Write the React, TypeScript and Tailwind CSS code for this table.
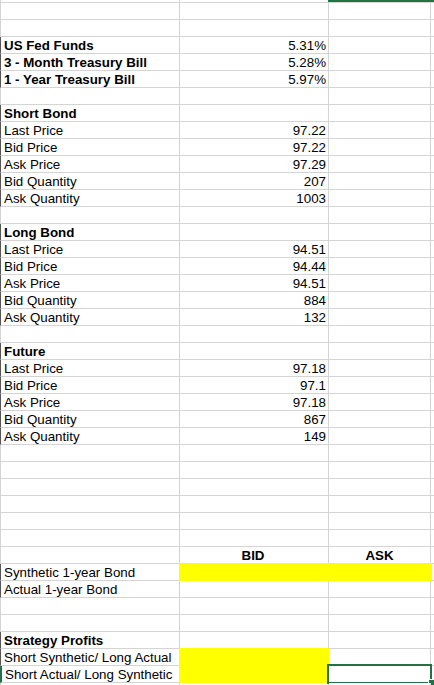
import React from "react";

type Row = {
  a?: string;
  b?: string;
  c?: string;
  bold?: boolean; // bold label in col A
  head?: boolean; // bold centered header in B/C
  yb?: boolean; // yellow fill col B
  yc?: boolean; // yellow fill col C
  mark?: boolean; // dark left edge
  sel?: boolean; // selected C cell
};

const block = (title: string, vals: string[]): Row[] => [
  { a: title, bold: true, mark: true },
  { a: "Last Price", b: vals[0], mark: true },
  { a: "Bid Price", b: vals[1], mark: true },
  { a: "Ask Price", b: vals[2], mark: true },
  { a: "Bid Quantity", b: vals[3], mark: true },
  { a: "Ask Quantity", b: vals[4], mark: true },
];

const rows: Row[] = [
  {},
  {},
  { a: "US Fed Funds", b: "5.31%", bold: true, mark: true },
  { a: "3 - Month Treasury Bill", b: "5.28%", bold: true, mark: true },
  { a: "1 - Year Treasury Bill", b: "5.97%", bold: true, mark: true },
  {},
  ...block("Short Bond", ["97.22", "97.22", "97.29", "207", "1003"]),
  {},
  ...block("Long Bond", ["94.51", "94.44", "94.51", "884", "132"]),
  {},
  ...block("Future", ["97.18", "97.1", "97.18", "867", "149"]),
  {},
  {},
  {},
  {},
  {},
  {},
  { b: "BID", c: "ASK", head: true },
  { a: "Synthetic 1-year Bond", yb: true, yc: true, mark: true },
  { a: "Actual 1-year Bond", mark: true },
  {},
  {},
  { a: "Strategy Profits", bold: true, mark: true },
  { a: "Short Synthetic/ Long Actual", yb: true, mark: true },
  { a: "Short Actual/ Long Synthetic", yb: true, mark: true, sel: true },
  {},
];

function SheetRow({ r }: { r: Row }) {
  const yellow = "bg-[#ffff00] border-[#ffff00] shadow-[0_0_0_1px_#ffff00]";
  return (
    <div className="flex h-[17px]">
      <div
        className={`box-border w-[180px] shrink-0 border-b border-r border-l border-b-[#d4d4d4] border-r-[#d4d4d4] bg-white pl-[3px] whitespace-nowrap overflow-hidden ${
          r.sel ? "border-l-[#217346] border-l-2 pl-[2px]" : r.mark ? "border-l-[#555555]" : "border-l-[#d4d4d4]"
        } ${r.bold ? "font-bold" : ""}`}
      >
        {r.a}
      </div>
      <div
        className={`box-border w-[149px] shrink-0 border-b border-r pr-[2px] whitespace-nowrap ${
          r.head ? "text-center font-bold" : "text-right"
        } ${r.yb ? yellow : "border-[#d4d4d4] bg-white"}`}
      >
        {r.b}
      </div>
      <div
        className={`relative box-border w-[102px] shrink-0 border-b border-r whitespace-nowrap ${
          r.head ? "text-center font-bold" : "text-right pr-[2px]"
        } ${r.yc ? yellow : "border-[#d4d4d4] bg-white"}`}
      >
        {r.c}
        {r.sel && (
          <div className="absolute -left-[2px] -top-[2px] h-[20px] w-[105px] border-2 border-[#217346]">
            <div className="absolute left-[99px] top-[13px] h-[7px] w-[7px] border border-white bg-[#217346]" />
          </div>
        )}
      </div>
      <div className="box-border flex-1 border-b border-[#d4d4d4] bg-white" />
    </div>
  );
}

export default function App() {
  return (
    <div
      className="h-[685px] w-[434px] overflow-hidden bg-white text-[13.33px] leading-[17px] text-black"
      style={{ fontFamily: '"Liberation Sans", Arial, sans-serif' }}
    >
      {/* top strip with the selection edge of the cell above */}
      <div className="flex h-[3px]">
        <div className="box-border w-[180px] border-b border-l border-r border-[#d4d4d4]" />
        <div className="box-border w-[148px] border-b border-[#d4d4d4]" />
        <div className="box-border flex-1 border-b border-[#d4d4d4] bg-[#217346]" />
      </div>
      {rows.map((r, i) => (
        <SheetRow key={i} r={r} />
      ))}
    </div>
  );
}
